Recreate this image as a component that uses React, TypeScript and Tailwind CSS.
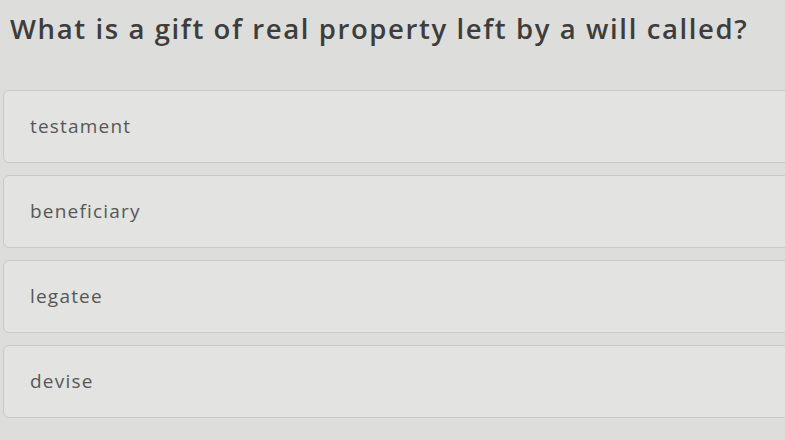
const options = ['testament', 'beneficiary', 'legatee', 'devise'];

export default function App() {
    return (
        <div
            className="h-[440px] w-[785px] overflow-hidden bg-[#dddddb] text-[#444444]"
            style={{ fontFamily: '"Open Sans", Lato, sans-serif' }}
        >
            {/* Question */}
            <h1 className="pl-[10px] pt-[10px] text-[27.5px] leading-[38px] font-semibold tracking-[1.6px] text-[#3d3d3d]">
                What is a gift of real property left by a will called?
            </h1>

            {/* Answers */}
            <div className="mt-[42px] flex w-[800px] flex-col gap-[12px] pl-[3px]">
                {options.map((opt) => (
                    <div
                        key={opt}
                        className="flex h-[73px] items-center rounded-[6px] border border-[#c9c9c7] bg-[#e3e3e1] pl-[26px] text-[19px] font-medium tracking-[1.2px] text-[#575757]"
                    >
                        {opt}
                    </div>
                ))}
            </div>
        </div>
    );
}
